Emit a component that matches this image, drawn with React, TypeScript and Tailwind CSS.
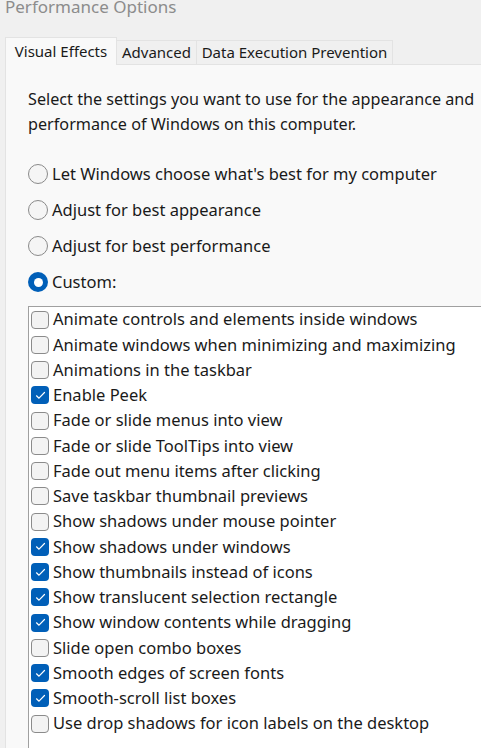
import { useState } from 'react'

const effects: { label: string; checked: boolean }[] = [
  { label: 'Animate controls and elements inside windows', checked: false },
  { label: 'Animate windows when minimizing and maximizing', checked: false },
  { label: 'Animations in the taskbar', checked: false },
  { label: 'Enable Peek', checked: true },
  { label: 'Fade or slide menus into view', checked: false },
  { label: 'Fade or slide ToolTips into view', checked: false },
  { label: 'Fade out menu items after clicking', checked: false },
  { label: 'Save taskbar thumbnail previews', checked: false },
  { label: 'Show shadows under mouse pointer', checked: false },
  { label: 'Show shadows under windows', checked: true },
  { label: 'Show thumbnails instead of icons', checked: true },
  { label: 'Show translucent selection rectangle', checked: true },
  { label: 'Show window contents while dragging', checked: true },
  { label: 'Slide open combo boxes', checked: false },
  { label: 'Smooth edges of screen fonts', checked: true },
  { label: 'Smooth-scroll list boxes', checked: true },
  { label: 'Use drop shadows for icon labels on the desktop', checked: false },
]

const modes = [
  "Let Windows choose what's best for my computer",
  'Adjust for best appearance',
  'Adjust for best performance',
  'Custom:',
]

function Radio({ selected }: { selected: boolean }) {
  if (selected) {
    return (
      <span className="flex h-[20px] w-[20px] shrink-0 items-center justify-center rounded-full bg-[#005fb8]">
        <span className="h-[9px] w-[9px] rounded-full bg-white" />
      </span>
    )
  }
  return <span className="h-[20px] w-[20px] shrink-0 rounded-full border border-[#8a8a8a] bg-[#f5f5f5]" />
}

function Checkbox({ checked }: { checked: boolean }) {
  if (checked) {
    return (
      <span className="flex h-[18px] w-[18px] shrink-0 items-center justify-center rounded-[4px] bg-[#005fb8]">
        <svg width="11" height="9" viewBox="0 0 11 9" fill="none">
          <path d="M1.5 4.8 L4 7.2 L9.5 1.5" stroke="white" strokeWidth="1.2" strokeLinecap="round" strokeLinejoin="round" />
        </svg>
      </span>
    )
  }
  return <span className="h-[18px] w-[18px] shrink-0 rounded-[4px] border border-[#8b8b8b] bg-[#f3f3f3]" />
}

export default function App() {
  const [mode, setMode] = useState(3)
  const [items, setItems] = useState(effects)

  return (
    <div className="h-[748px] w-[481px] overflow-hidden bg-[#f0f0f0] text-[#1a1a1a]" style={{ fontFamily: '"Noto Sans", "Open Sans", sans-serif' }}>
      <div className="-mt-[5px] h-[24px] pl-[5px] text-[17px] leading-[24px] text-[#8c8c8c]">Performance Options</div>

      <div className="mt-[18px] flex items-end pl-[5px]">
        <div className="relative z-10 -mb-px flex h-[28px] w-[112px] items-start justify-center border-x border-t border-[#e3e3e3] bg-[#f9f9f9] pt-[1px] text-[15px] leading-[24px]">
          Visual Effects
        </div>
        <div className="flex h-[24px] w-[80px] items-center justify-center border-t border-r border-[#e3e3e3] bg-[#f0f0f0] text-[15px]">
          Advanced
        </div>
        <div className="flex h-[24px] w-[196px] items-center justify-center border-t border-r border-[#e3e3e3] bg-[#f0f0f0] text-[15px]">
          Data Execution Prevention
        </div>
      </div>

      <div className="ml-[5px] h-[700px] border-l border-t border-[#e3e3e3] bg-[#f9f9f9] pl-[22px]">
        <p className="mt-[22px] whitespace-nowrap text-[16.2px] leading-[25px]">
          Select the settings you want to use for the appearance and
          <br />
          performance of Windows on this computer.
        </p>

        <div className="mt-[27px] flex flex-col gap-[16px]">
          {modes.map((m, i) => (
            <button key={m} type="button" onClick={() => setMode(i)} className="flex h-[20px] items-center gap-[4px] text-left text-[16.5px]">
              <Radio selected={mode === i} />
              <span>{m}</span>
            </button>
          ))}
        </div>

        <div className="mt-[14px] h-[480px] w-[470px] border border-[#a0a0a0] bg-white">
          {items.map((item, i) => (
            <button
              key={item.label}
              type="button"
              onClick={() => setItems(items.map((x, j) => (j === i ? { ...x, checked: !x.checked } : x)))}
              className="flex h-[25.25px] w-full items-center gap-[4px] pl-[2px] text-left text-[16.5px]"
            >
              <Checkbox checked={item.checked} />
              <span className="whitespace-nowrap">{item.label}</span>
            </button>
          ))}
        </div>
      </div>
    </div>
  )
}
